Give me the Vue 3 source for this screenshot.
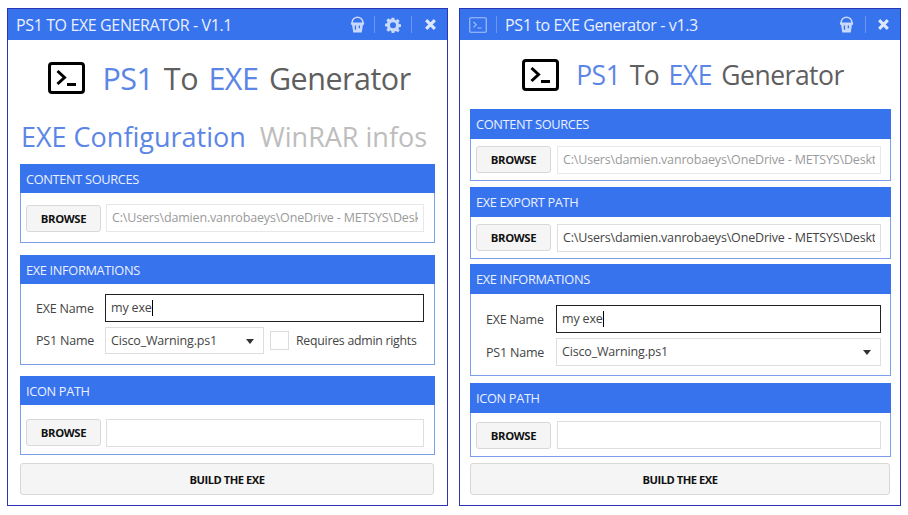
<script setup>
const path = 'C:\\Users\\damien.vanrobaeys\\OneDrive - METSYS\\Desktop\\PS1 to EXE'
</script>

<template>
  <div class="page">
    <section class="win win-a">
      <header class="bar">
        <span class="bar-title">PS1 TO EXE GENERATOR - V1.1</span>
        <svg class="ico bucket" viewBox="0 0 16 18"><path d="M2.200 8V7a5.800 5.800 0 0 1 11.600 0v1" fill="none" stroke="currentColor" stroke-width="1.600"/><path d="M1 6.800h14v2.400h-1.200L12.500 17.500h-9L2.200 9.200H1z" fill="currentColor"/><path d="M5.800 10v4.500M10 10v3" stroke="#3873ee" stroke-width="1.400"/></svg>
        <i class="sep sep-a1"></i>
        <svg class="ico gear" viewBox="0 0 24 24"><path fill="currentColor" fill-rule="evenodd" d="M10 1h4l.6 3.100 1.900.8L19.100 3 22 5.900l-1.900 2.600.8 1.900L24 11v4l-3.100.5-.8 1.900 1.900 2.700-2.900 2.900-2.600-1.900-1.900.8L14 24h-4l-.6-3.100-1.900-.8L4.900 22 2 19.100l1.900-2.700-.8-1.900L0 14v-4l3.100-.6.800-1.900L2 4.900 4.900 2l2.600 1.900 1.900-.8zM12 8a4.500 4.500 0 1 0 0 9 4.500 4.500 0 0 0 0-9z"/></svg>
        <i class="sep sep-a2"></i>
        <svg class="ico close" viewBox="0 0 12 12"><path d="M2 2l8 8M10 2l-8 8" stroke="currentColor" stroke-width="2.800"/></svg>
      </header>

      <div class="hero hero-a">
        <svg class="term" viewBox="0 0 37 32"><rect x="1.500" y="1.500" width="34" height="29" rx="2.500" fill="#fff" stroke="#000" stroke-width="3"/><path d="M9.500 9l7 6.500-7 6.500" fill="none" stroke="#000" stroke-width="3"/><path d="M19 22.500h9" stroke="#000" stroke-width="3"/></svg>
        <h1><b>PS1</b> <span>To</span> <b>EXE</b> <span>Generator</span></h1>
      </div>

      <nav class="tabs"><span class="on">EXE Configuration</span><span class="off">WinRAR infos</span></nav>

      <div class="stack stack-a">
        <div class="group first">
          <div class="head">CONTENT SOURCES</div>
          <div class="row row-a1">
            <button class="btn">BROWSE</button>
            <div class="field muted"><div class="clip">{{ path }}</div></div>
          </div>
        </div>
        <div class="group">
          <div class="head">EXE INFORMATIONS</div>
          <div class="form form-a">
            <label>EXE Name</label>
            <div class="field focus"><span>my exe</span><i class="caret"></i></div>
            <label>PS1 Name</label>
            <div class="combo-line">
              <div class="field combo short">Cisco_Warning.ps1<i class="arrow"></i></div>
              <i class="check"></i>
              <span class="check-label">Requires admin rights</span>
            </div>
          </div>
        </div>
        <div class="group">
          <div class="head">ICON PATH</div>
          <div class="row row-a2">
            <button class="btn">BROWSE</button>
            <div class="field"></div>
          </div>
        </div>
      </div>
      <button class="build build-a">BUILD THE EXE</button>
    </section>

    <section class="win win-b">
      <header class="bar">
        <svg class="app" viewBox="0 0 18 16"><rect x=".75" y=".75" width="16.500" height="14.500" rx="1" fill="none" stroke="currentColor" stroke-width="1.100"/><path d="M4.500 5l2.800 2.700-2.800 2.700M8.500 11h4" fill="none" stroke="currentColor" stroke-width="1.100"/></svg>
        <i class="sep sep-app"></i>
        <span class="bar-title">PS1 to EXE Generator - v1.3</span>
        <svg class="ico bucket" viewBox="0 0 16 18"><path d="M2.200 8V7a5.800 5.800 0 0 1 11.600 0v1" fill="none" stroke="currentColor" stroke-width="1.600"/><path d="M1 6.800h14v2.400h-1.200L12.500 17.500h-9L2.200 9.200H1z" fill="currentColor"/><path d="M5.800 10v4.500M10 10v3" stroke="#3873ee" stroke-width="1.400"/></svg>
        <i class="sep sep-b"></i>
        <svg class="ico close" viewBox="0 0 12 12"><path d="M2 2l8 8M10 2l-8 8" stroke="currentColor" stroke-width="2.800"/></svg>
      </header>

      <div class="hero hero-b">
        <svg class="term" viewBox="0 0 37 32"><rect x="1.500" y="1.500" width="34" height="29" rx="2.500" fill="#fff" stroke="#000" stroke-width="3"/><path d="M9.500 9l7 6.500-7 6.500" fill="none" stroke="#000" stroke-width="3"/><path d="M19 22.500h9" stroke="#000" stroke-width="3"/></svg>
        <h1><b>PS1</b> <span>To</span> <b>EXE</b> <span>Generator</span></h1>
      </div>

      <div class="stack stack-b">
        <div class="group g-b1">
          <div class="head">CONTENT SOURCES</div>
          <div class="row row-b">
            <button class="btn">BROWSE</button>
            <div class="field muted"><div class="clip">{{ path }}</div></div>
          </div>
        </div>
        <div class="group">
          <div class="head">EXE EXPORT PATH</div>
          <div class="row row-b">
            <button class="btn">BROWSE</button>
            <div class="field"><div class="clip">{{ path }}</div></div>
          </div>
        </div>
        <div class="group g-b3">
          <div class="head">EXE INFORMATIONS</div>
          <div class="form form-b">
            <label>EXE Name</label>
            <div class="field focus"><span>my exe</span><i class="caret"></i></div>
            <label>PS1 Name</label>
            <div class="field combo">Cisco_Warning.ps1<i class="arrow"></i></div>
          </div>
        </div>
        <div class="group">
          <div class="head">ICON PATH</div>
          <div class="row row-b last">
            <button class="btn">BROWSE</button>
            <div class="field"></div>
          </div>
        </div>
      </div>
      <button class="build build-b">BUILD THE EXE</button>
    </section>
  </div>
</template>

<style>
html, body { background: #fff; }
</style>

<style scoped>
.page {
  width: 908px;
  height: 515px;
  box-sizing: border-box;
  padding: 8px 0 0 7px;
  display: flex;
  align-items: flex-start;
  gap: 11px;
  overflow: hidden;
  background: #fff;
  font-family: "Open Sans", "Noto Sans", sans-serif;
  color: #333;
}
.win {
  height: 498px;
  box-sizing: border-box;
  border: 1px solid #2b35b5;
  background: #fff;
  display: flex;
  flex-direction: column;
}
.win-a { width: 441px; }
.win-b { width: 442px; }

.bar {
  height: 31px;
  flex: none;
  background: #3873ee;
  color: #fff;
  display: flex;
  align-items: center;
  padding: 0 10px 0 8px;
}
.bar-title { font-size: 16px; letter-spacing: -.38px; color: #eaf0ff; margin-right: auto; white-space: nowrap; }
.ico { display: block; color: #c9d9fb; flex: none; }
.bucket { width: 15px; height: 17px; }
.gear { width: 16px; height: 16px; }
.close { width: 13px; height: 13px; color: #dde7fd; }
.sep { width: 1px; height: 17px; background: #6d96f0; margin: 0 10px; flex: none; }
.sep-a1 { margin: 0 10px 0 9px; }
.sep-a2 { margin: 0 12px 0 10px; }
.sep-app { margin: 0 8px 0 9px; }
.sep-b { margin: 0 11px 0 11px; }
.app { width: 18px; height: 16px; color: #a9c3f8; flex: none; margin-left: 1px; }

.hero { display: flex; align-items: center; justify-content: center; flex: none; box-sizing: border-box; }
.hero-a { height: 76px; gap: 17px; padding-left: 4px; }
.hero-b { height: 69px; gap: 17px; padding: 1px 0 0 6px; }
.term { width: 37px; height: 32px; flex: none; }
h1 { margin: 0; font-weight: 400; white-space: nowrap; word-spacing: 3px; letter-spacing: -.5px; }
h1 b { font-weight: 400; color: #5c86e6; }
h1 span { color: #5f5f5f; }
.hero-a h1 { font-size: 30.500px; }
.hero-b h1 { font-size: 26.500px; }

.tabs { display: flex; gap: 14px; padding: 0 0 7px 13px; box-sizing: border-box; height: 48px; align-items: center; flex: none; font-size: 27px; white-space: nowrap; }
.tabs .on { color: #5c86e6; }
.tabs .off { color: #bdbdbd; }

.stack { display: flex; flex-direction: column; flex: none; }
.stack-a { margin: 0 12px; gap: 11px; }
.stack-b { margin: 0 9px 0 10px; gap: 5px; }
.first { margin-bottom: 1px; }
.g-b1 { margin-bottom: 1px; }
.g-b3 { margin-bottom: 2px; }
.group { border: 1px solid #7b9fea; display: flex; flex-direction: column; }
.head {
  height: 29px;
  margin: -1px -1px 0;
  background: #3873ee;
  color: #eaf0ff;
  font-size: 12.800px;
  letter-spacing: -.35px;
  line-height: 30px;
  padding-left: 6px;
  white-space: nowrap;
}
.stack-b .head { height: 30px; }
.row { display: flex; align-items: center; gap: 5px; padding: 0 10px 0 5px; box-sizing: border-box; }
.row-a1 { height: 49px; padding-top: 1px; }
.row-a2 { height: 49px; padding-top: 6px; }
.row-b { height: 41px; gap: 6px; padding-right: 9px; }
.row-b.last { height: 43px; padding-top: 1px; }
.btn, .build {
  font-family: inherit;
  font-weight: 700;
  color: #111;
  background: #f5f5f5;
  border: 1px solid #d8d8d8;
  border-radius: 3px;
  letter-spacing: -.35px;
  padding: 0;
}
.btn { width: 75px; height: 27px; font-size: 11.300px; flex: none; }
.field {
  flex: 1;
  min-width: 0;
  height: 28px;
  box-sizing: border-box;
  border: 1px solid #dedede;
  padding: 0 5px;
  font-size: 12.500px;
  letter-spacing: -.17px;
  line-height: 26px;
  color: #444;
  white-space: nowrap;
  background: #fff;
}
.clip { overflow: hidden; }
.muted { color: #9a9a9a; border-color: #e8e8e8; }
.focus { border-color: #222; display: flex; align-items: center; color: #444; }
.caret { width: 1px; height: 16px; background: #000; }
.form { display: grid; align-items: center; }
.form label { font-size: 12.500px; letter-spacing: -.2px; color: #444; white-space: nowrap; }
.form-a { grid-template-columns: 69px 1fr; padding: 10px 10px 10px 15px; row-gap: 5px; }
.form-b { grid-template-columns: 70px 1fr; padding: 11px 9px 9px 15px; row-gap: 5px; }
.combo { position: relative; flex: none; }
.form-b .combo { width: 100%; }
.short { width: 159px; height: 27px; }
.arrow { position: absolute; right: 9px; top: 11px; border: 4px solid transparent; border-top: 5px solid #333; border-bottom: 0; }
.combo-line { display: flex; align-items: center; }
.check { width: 19px; height: 19px; box-sizing: border-box; border: 1px solid #dcdcdc; margin-left: 6px; flex: none; }
.check-label { font-size: 12.300px; letter-spacing: -.25px; margin-left: 7px; color: #444; white-space: nowrap; }
.build { height: 32px; font-size: 11.200px; letter-spacing: -.5px; flex: none; }
.build-a { margin: 8px 13px 0 12px; }
.build-b { margin: 6px 10px 0 10px; }
</style>
